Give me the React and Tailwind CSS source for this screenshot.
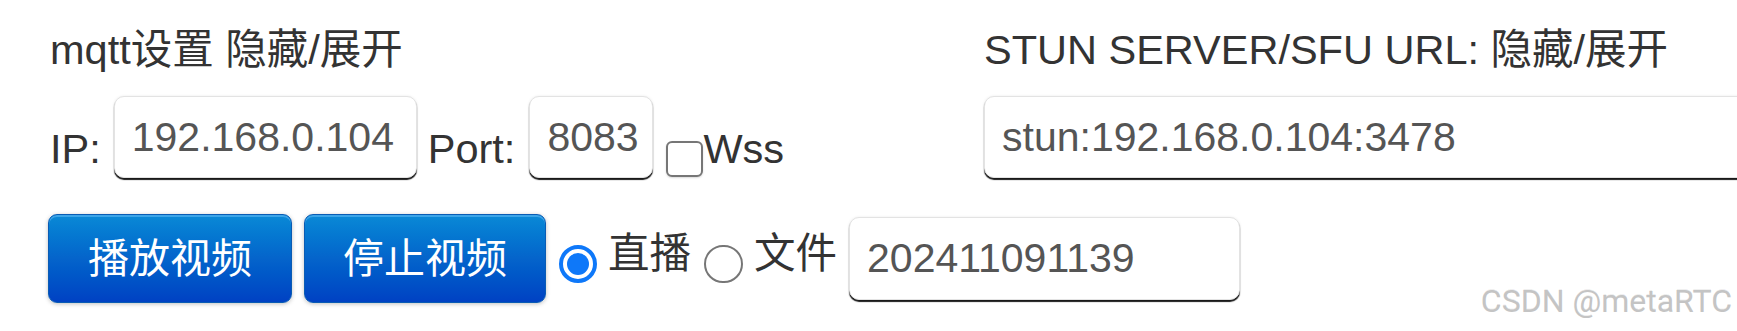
import React from "react";

const font = "font-['Liberation_Sans','Noto_Sans_CJK_SC',sans-serif]";

function Field({ value, className }) {
  return (
    <input
      readOnly
      value={value}
      className={`block shrink-0 h-[82px] bg-white border border-[#e3e3e3] rounded-[10px] pl-[17px] pr-[8px] text-[41px] text-[#555] outline-none shadow-[0_2px_1px_rgba(0,0,0,0.9),0_0_3px_rgba(0,0,0,0.08)] ${font} ${className}`}
    />
  );
}

function BlueButton({ children, className }) {
  return (
    <button
      className={`shrink-0 h-[89px] rounded-[9px] border border-[#0a5cb4] bg-linear-to-b from-[#0b89d6] via-[#0564cb] to-[#0041c3] text-white text-[41px] leading-[46px] flex items-center justify-center shadow-[inset_0_2px_0_rgba(120,200,255,0.45),0_1px_4px_rgba(0,0,0,0.25)] ${className}`}
    >
      {children}
    </button>
  );
}

export default function App() {
  return (
    <div className={`relative w-[1737px] h-[331px] overflow-hidden bg-white text-[#333] text-[41.5px] ${font}`}>
      <div className="flex pt-[27px] pl-[48px]">
        {/* left column */}
        <div className="w-[936px] shrink-0 flex flex-col">
          <div className="h-[46px] leading-[46px] pl-[2px] whitespace-nowrap">mqtt设置 隐藏/展开</div>

          <div className="mt-[23px] h-[82px] flex items-start whitespace-nowrap">
            <span className="shrink-0 mt-[30px] leading-[46px] pl-[2px]">IP:</span>
            <Field value="192.168.0.104" className="ml-[13px] w-[303px]" />
            <span className="shrink-0 ml-[11px] mt-[30px] leading-[46px]">Port:</span>
            <Field value="8083" className="ml-[14px] w-[124px]" />
            <span className="shrink-0 ml-[13px] mt-[45px] w-[37px] h-[36px] rounded-[6px] border-[2.5px] border-[#767676] bg-white shadow-[0_1px_2px_rgba(0,0,0,0.15)]" />
            <span className="shrink-0 mt-[30px] leading-[46px]">Wss</span>
          </div>

          <div className="mt-[36px] flex items-start whitespace-nowrap">
            <BlueButton className="w-[244px]">播放视频</BlueButton>
            <BlueButton className="ml-[12px] w-[242px]">停止视频</BlueButton>
            <span className="shrink-0 ml-[13px] mt-[31px] w-[38px] h-[38px] rounded-full border-[4px] border-[#0e78f9] bg-white flex items-center justify-center">
              <span className="w-[22px] h-[22px] rounded-full bg-[#0e78f9]" />
            </span>
            <span className="shrink-0 ml-[11px] mt-[17px] leading-[46px]">直播</span>
            <span className="shrink-0 ml-[13px] mt-[31px] w-[39px] h-[38px] rounded-full border-[2px] border-[#767676] bg-white" />
            <span className="shrink-0 ml-[11px] mt-[17px] leading-[46px]">文件</span>
            <Field value="202411091139" className="ml-[12px] mt-[3px] w-[391px] h-[83px]" />
          </div>
        </div>

        {/* right column */}
        <div className="shrink-0 flex flex-col">
          <div className="h-[46px] leading-[46px] whitespace-nowrap">STUN SERVER/SFU URL: 隐藏/展开</div>
          <Field value="stun:192.168.0.104:3478" className="mt-[23px] w-[820px]" />
        </div>
      </div>

      <div className="absolute right-[5px] bottom-[12px] text-[32px] leading-[36px] text-[#c4c4c4] font-['Roboto',sans-serif] [text-shadow:0_1px_0_rgba(255,255,255,0.9),0_-1px_0_rgba(0,0,0,0.08)]">
        CSDN @metaRTC
      </div>
    </div>
  );
}
